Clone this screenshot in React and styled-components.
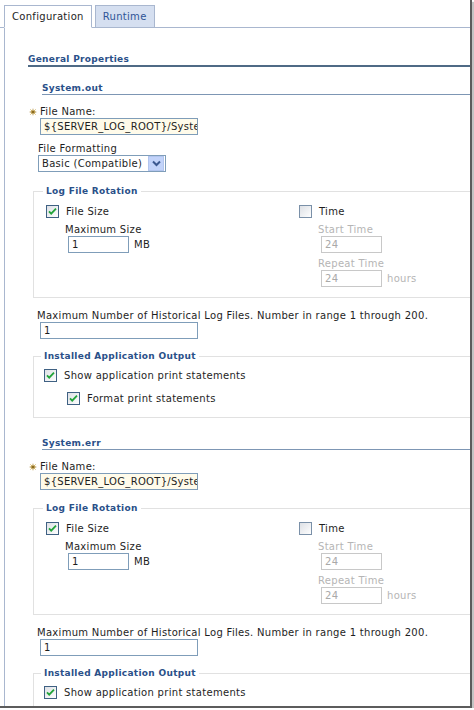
import React from 'react';
import styled, { createGlobalStyle } from 'styled-components';

const GlobalStyle = createGlobalStyle`
    body {
        margin: 0;
        background: #ffffff;
        font-family: "DejaVu Sans", Verdana, sans-serif;
        font-size: 10px;
        letter-spacing: 0.3px;
        color: #1e1e1e;
    }
`;

const Frame = styled.div`
    width: 470px;
    height: 706px;
    overflow: hidden;
    border-right: 2px solid #5c5c5c;
    border-bottom: 2px solid #5c5c5c;
    box-shadow: 2px 2px 1px #c4c4c4;
    background: #ffffff;
`;

const TabBar = styled.div`
    display: flex;
    align-items: flex-end;
    gap: 3px;
    padding: 5px 0 0 4px;
    border-bottom: 1px solid #a9b7cf;
`;

const Tab = styled.div`
    height: 21px;
    line-height: 21px;
    padding: 0 7px;
    border: 1px solid #a9b7cf;
    border-bottom: ${({ active }) => (active ? '1px solid #ffffff' : '0')};
    margin-bottom: ${({ active }) => (active ? '-1px' : '0')};
    background: ${({ active }) => (active ? '#ffffff' : '#d5dff0')};
    color: ${({ active }) => (active ? '#1e1e1e' : '#2f5597')};
`;

const Panel = styled.div`
    margin-left: 4px;
    border-left: 1px solid #a9b7cf;
    padding-top: 26px;
    height: 700px;
`;

const PageTitle = styled.div`
    margin-left: 23px;
    font-size: 9px;
    font-weight: bold;
    line-height: 11px;
    color: #2a5089;
    border-bottom: 2px solid #4f6a85;
`;

const SubTitle = styled.div`
    margin: ${({ first }) => (first ? '16px' : '20px')} 0 0 37px;
    font-size: 9px;
    font-weight: bold;
    line-height: 11px;
    color: #2a5089;
    border-bottom: 1px solid #7d96b4;
`;

const Label = styled.div`
    display: flex;
    align-items: center;
    gap: 3px;
    margin: ${({ m }) => m || '0'};
    line-height: 12px;
    white-space: nowrap;
    color: ${({ disabled }) => (disabled ? '#b5b5b5' : '#1e1e1e')};
`;

const TextInput = styled.div`
    box-sizing: border-box;
    width: ${({ w }) => w}px;
    height: 17px;
    margin: ${({ m }) => m || '0'};
    padding: 0 3px;
    line-height: 15px;
    white-space: nowrap;
    overflow: hidden;
    border: 1px solid ${({ disabled }) => (disabled ? '#c8c8c8' : '#7f9db9')};
    background: ${({ required }) => (required ? '#fffbea' : '#ffffff')};
    color: ${({ disabled }) => (disabled ? '#a9a9a9' : '#1e1e1e')};
`;

const Select = styled.div`
    box-sizing: border-box;
    display: flex;
    align-items: center;
    justify-content: space-between;
    width: 128px;
    height: 17px;
    margin-left: 33px;
    padding: 0 1px 0 3px;
    white-space: nowrap;
    border: 1px solid #7f9db9;
`;

const DropButton = styled.div`
    display: flex;
    align-items: center;
    justify-content: center;
    flex-shrink: 0;
    width: 14px;
    height: 13px;
    background: #c2d3fa;
    border: 1px solid #b2c5ee;
`;

const Group = styled.fieldset`
    margin: ${({ m }) => m};
    padding: 0 0 ${({ pb }) => pb}px ${({ pl }) => pl}px;
    border: 1px solid #e1e1e1;
    border-right: 0;
    min-width: 0;
`;

const Legend = styled.legend`
    margin-left: -3px;
    padding: 0 3px;
    font-size: 9px;
    font-weight: bold;
    line-height: 12px;
    color: #2a5089;
`;

const RotationGrid = styled.div`
    display: grid;
    grid-template-columns: 253px 1fr;
    margin-top: 8px;
`;

const Column = styled.div`
    display: flex;
    flex-direction: column;
`;

const CheckRow = styled.div`
    display: flex;
    align-items: center;
    gap: 7px;
    margin: ${({ m }) => m || '0'};
    line-height: 13px;
    white-space: nowrap;
`;

const InputRow = styled.div`
    display: flex;
    align-items: center;
    gap: 5px;
    margin-left: 22px;
    color: ${({ disabled }) => (disabled ? '#b5b5b5' : '#1e1e1e')};
`;

function Star() {
    return (
        <svg width="8" height="8" viewBox="0 0 8 8">
            <path d="M4 0 L4.7 3 L8 4 L4.7 5 L4 8 L3.3 5 L0 4 L3.3 3 Z" fill="#a8822a" />
            <path d="M1.4 1.4 L6.6 6.6 M1.4 6.6 L6.6 1.4" stroke="#cfae55" strokeWidth="0.9" />
            <circle cx="4" cy="4" r="1.2" fill="#8a6a1c" />
        </svg>
    );
}

function Check({ checked }) {
    return (
        <svg width="13" height="13" viewBox="0 0 13 13">
            <defs>
                <linearGradient id="cbfill" x1="0" y1="0" x2="1" y2="1">
                    <stop offset="0" stopColor="#dcdfe4" />
                    <stop offset="1" stopColor="#ffffff" />
                </linearGradient>
            </defs>
            <rect x="0.5" y="0.5" width="12" height="12" fill="url(#cbfill)" stroke={checked ? '#3f6183' : '#7a90a8'} />
            {checked && (
                <path d="M3 6.3 L5.2 8.6 L10 3.6" fill="none" stroke="#22a43a" strokeWidth="1.8" />
            )}
        </svg>
    );
}

function Chevron() {
    return (
        <svg width="9" height="7" viewBox="0 0 9 7">
            <path d="M1 1.5 L4.5 5 L8 1.5" fill="none" stroke="#3b5890" strokeWidth="2" />
        </svg>
    );
}

function LogSection({ title, formatting, first }) {
    return (
        <>
            <SubTitle first={first}>{title}</SubTitle>
            <Label m="11px 0 0 24px">
                <Star />
                File Name:
            </Label>
            <TextInput required w={158} m="0 0 0 35px">
                {'${SERVER_LOG_ROOT}/SystemOut.log'}
            </TextInput>
            {formatting && (
                <>
                    <Label m="8px 0 0 33px">File Formatting</Label>
                    <Select>
                        Basic (Compatible)
                        <DropButton>
                            <Chevron />
                        </DropButton>
                    </Select>
                </>
            )}
            <Group m={formatting ? '13px 0 0 28px' : '12px 0 0 28px'} pl={12} pb={10}>
                <Legend>Log File Rotation</Legend>
                <RotationGrid>
                    <Column>
                        <CheckRow>
                            <Check checked />
                            File Size
                        </CheckRow>
                        <Label m="6px 0 0 19px">Maximum Size</Label>
                        <InputRow>
                            <TextInput w={61}>1</TextInput>
                            MB
                        </InputRow>
                    </Column>
                    <Column>
                        <CheckRow>
                            <Check />
                            Time
                        </CheckRow>
                        <Label disabled m="6px 0 0 19px">Start Time</Label>
                        <InputRow disabled>
                            <TextInput disabled w={61}>24</TextInput>
                        </InputRow>
                        <Label disabled m="5px 0 0 19px">Repeat Time</Label>
                        <InputRow disabled>
                            <TextInput disabled w={61}>24</TextInput>
                            hours
                        </InputRow>
                    </Column>
                </RotationGrid>
            </Group>
            <Label m="12px 0 0 32px">
                Maximum Number of Historical Log Files. Number in range 1 through 200.
            </Label>
            <TextInput w={158} m="0 0 0 35px">1</TextInput>
            <Group m="11px 0 0 28px" pl={10} pb={12}>
                <Legend>Installed Application Output</Legend>
                <CheckRow m="7px 0 0 0">
                    <Check checked />
                    Show application print statements
                </CheckRow>
                <CheckRow m="10px 0 0 23px">
                    <Check checked />
                    Format print statements
                </CheckRow>
            </Group>
        </>
    );
}

export default function App() {
    return (
        <>
            <GlobalStyle />
            <Frame>
                <TabBar>
                    <Tab active>Configuration</Tab>
                    <Tab>Runtime</Tab>
                </TabBar>
                <Panel>
                    <PageTitle>General Properties</PageTitle>
                    <LogSection title="System.out" formatting first />
                    <LogSection title="System.err" />
                </Panel>
            </Frame>
        </>
    );
}
